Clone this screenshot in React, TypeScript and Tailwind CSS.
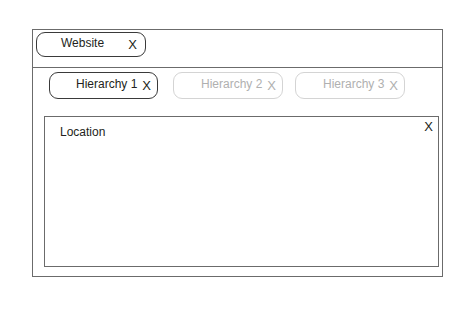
function Pill({ label, active, className }: { label: string; active?: boolean; className?: string }) {
  return (
    <div
      className={
        "flex items-center justify-between rounded-[9px] border pl-[24px] pr-[6px] " +
        (active ? "border-[#3a3a3a] text-[#231f20] " : "border-[#d4d4d4] text-[#b0b0b0] ") +
        (className ?? "")
      }
    >
      <span className="text-[12px] leading-none pb-[3px]">{label}</span>
      <span className="text-[13px] leading-none font-light">X</span>
    </div>
  );
}

export default function App() {
  return (
    <div className="w-[474px] h-[322px] bg-white pl-[32px] pt-[29px] font-['Liberation_Sans',Arial,sans-serif]">
      <div className="w-[411px] h-[248px] border border-[#6b6b6b] flex flex-col">
        {/* top row */}
        <div className="h-[38px] border-b border-[#6b6b6b] pl-[3px] pt-[2px]">
          <Pill label="Website" active className="w-[110px] h-[25px] pr-[8px]" />
        </div>

        {/* hierarchy row + panel */}
        <div className="flex flex-col pl-[11px]">
          <div className="flex pt-[4px] pl-[5px]">
            <Pill label="Hierarchy 1" active className="w-[109px] h-[27px] pl-[26px]" />
            <Pill label="Hierarchy 2" className="ml-[15px] w-[110px] h-[27px] pl-[27px]" />
            <Pill label="Hierarchy 3" className="ml-[12px] w-[110px] h-[27px] pl-[27px]" />
          </div>

          <div className="mt-[17px] w-[395px] h-[151px] border border-[#6b6b6b] flex justify-between pl-[15px] pr-[5px]">
            <span className="text-[12px] leading-none text-[#231f20] pt-[9px]">Location</span>
            <span className="text-[13px] leading-none font-light text-[#231f20] pt-[3px]">X</span>
          </div>
        </div>
      </div>
    </div>
  );
}
